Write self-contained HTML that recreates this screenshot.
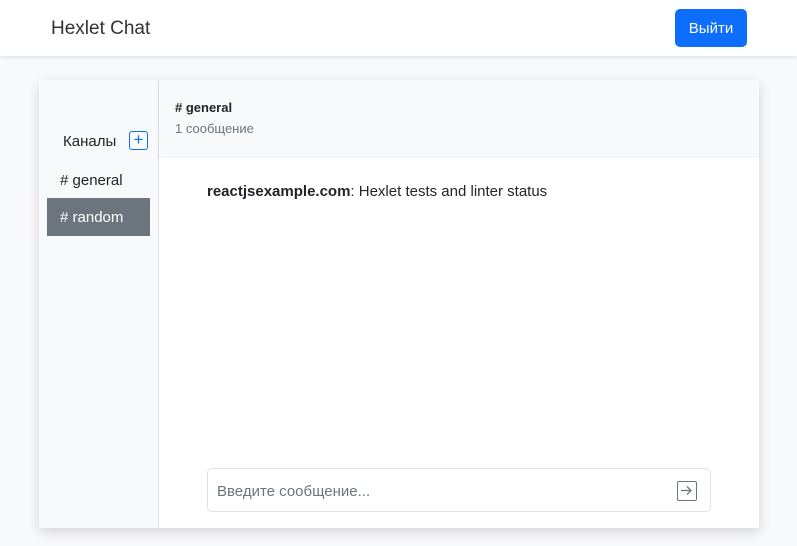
<!DOCTYPE html>
<html><head><meta charset="utf-8"><style>
*{box-sizing:border-box;margin:0;padding:0}
body{width:797px;height:546px;background:#f8f9fa;font-family:"Liberation Sans",sans-serif;color:#212529;position:relative;overflow:hidden}
.nav{position:absolute;left:0;top:0;width:797px;height:56px;background:#fff;box-shadow:0 1px 4px rgba(0,0,0,.12)}
.brand{position:absolute;left:51px;top:18px;font-size:19px;color:#333}
.btn{position:absolute;left:675px;top:9px;width:72px;height:38px;background:#0d6efd;color:#fff;border-radius:5px;font-size:15px;text-align:center;line-height:39px}
.card{position:absolute;left:39px;top:80px;width:720px;height:448px;background:#fff;box-shadow:0 4px 12px rgba(0,0,0,.15);border-radius:2px;overflow:hidden}
.side{position:absolute;left:0;top:0;width:120px;height:448px;background:#f8f9fa;border-right:1px solid #dee2e6}
.kan{position:absolute;left:24px;top:53px;font-size:15px}
.plus{position:absolute;left:90px;top:51px;width:19px;height:19px;border:1.5px solid #0d6efd;border-radius:3px;color:#0d6efd;font-size:17px;line-height:15px;text-align:center}
.ch{position:absolute;left:8px;width:103px;height:38px;font-size:15px;padding-left:13px;line-height:40px}
.hdr{position:absolute;left:120px;top:0;width:600px;height:76px;background:#f8f9fa;box-shadow:0 1px 3px rgba(0,0,0,.08)}
.msg{position:absolute;left:168px;top:103px;font-size:15px}
.inp{position:absolute;left:168px;top:388px;width:504px;height:44px;border:1px solid #dee2e6;border-radius:5px;font-size:15px;color:#6c757d;padding:14px 9px}
.send{position:absolute;left:469px;top:12px;width:20px;height:20px;border:1.5px solid #6c757d;border-radius:2px}
</style></head><body>
<div class="nav"><div class="brand">Hexlet Chat</div><div class="btn">Выйти</div></div>
<div class="card">
<div class="side"><div class="kan">Каналы</div><div class="plus">+</div>
<div class="ch" style="top:81px"># general</div>
<div class="ch" style="top:118px;background:#6c757d;color:#fff"># random</div></div>
<div class="hdr"><div style="position:absolute;left:16px;top:20px;font-size:13px;font-weight:bold"># general</div><div style="position:absolute;left:16px;top:41px;font-size:13px;color:#6c757d">1 сообщение</div></div>
<div class="msg"><b>reactjsexample.com</b>: Hexlet tests and linter status</div>
<div class="inp">Введите сообщение...<div class="send"><svg width="17" height="17" viewBox="0 0 17 17" style="position:absolute;left:0;top:0"><path d="M3 8.5h10M9 4.5l4 4-4 4" stroke="#6c757d" stroke-width="1.3" fill="none"/></svg></div></div>
</div>
</body></html>
